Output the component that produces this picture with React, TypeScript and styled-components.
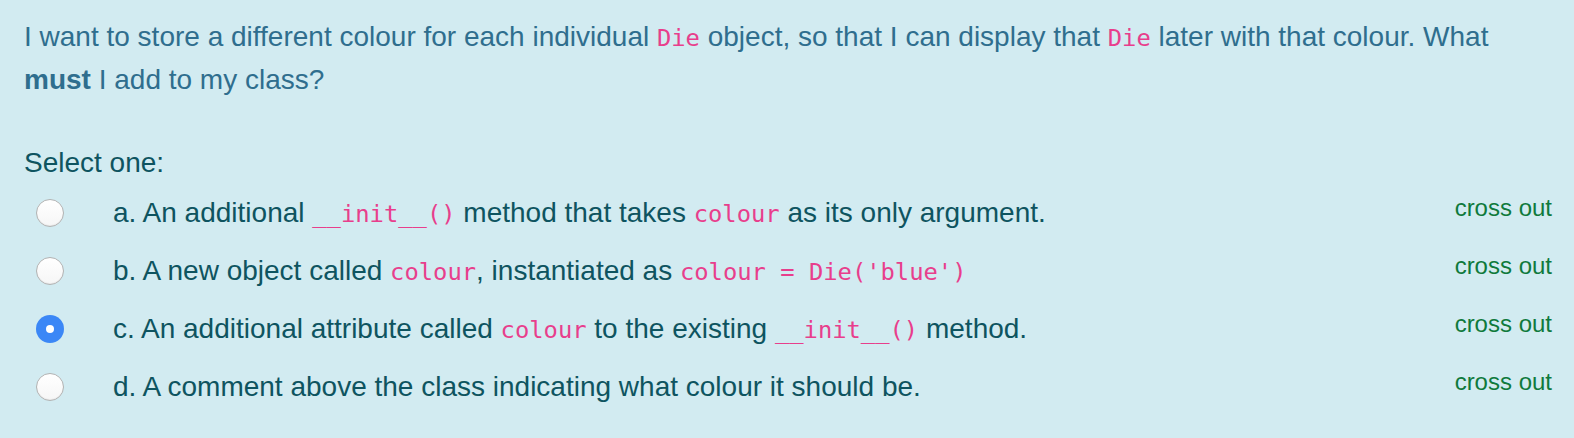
import styled, { createGlobalStyle } from "styled-components";

const GlobalStyle = createGlobalStyle`
    html, body {
        margin: 0;
        padding: 0;
        background-color: #d2ebf1;
    }
`;

type Part = { text: string; code?: boolean };

type Answer = {
    letter: string;
    parts: Part[];
    checked?: boolean;
};

const answers: Answer[] = [
    {
        letter: "a",
        parts: [
            { text: "An additional " },
            { text: "__init__()", code: true },
            { text: " method that takes " },
            { text: "colour", code: true },
            { text: " as its only argument." },
        ],
    },
    {
        letter: "b",
        parts: [
            { text: "A new object called " },
            { text: "colour", code: true },
            { text: ", instantiated as " },
            { text: "colour = Die('blue')", code: true },
        ],
    },
    {
        letter: "c",
        checked: true,
        parts: [
            { text: "An additional attribute called " },
            { text: "colour", code: true },
            { text: " to the existing " },
            { text: "__init__()", code: true },
            { text: " method." },
        ],
    },
    {
        letter: "d",
        parts: [{ text: "A comment above the class indicating what colour it should be." }],
    },
];

const App = () => {
    return (
        <StyledFormulation>
            <GlobalStyle />
            <StyledQuestionText>
                I want to store a different colour for each individual <StyledCode>Die</StyledCode> object, so
                that I can display that <StyledCode>Die</StyledCode> later with that colour. What{" "}
                <strong>must</strong> I add to my class?
            </StyledQuestionText>
            <StyledPrompt>Select one:</StyledPrompt>
            <StyledAnswerList>
                {answers.map((answer) => (
                    <StyledAnswerRow key={answer.letter}>
                        <StyledRadio $checked={!!answer.checked} />
                        <StyledAnswerLabel>
                            {answer.letter}.{" "}
                            {answer.parts.map((part, index) =>
                                part.code ? (
                                    <StyledCode key={index}>{part.text}</StyledCode>
                                ) : (
                                    <span key={index}>{part.text}</span>
                                )
                            )}
                        </StyledAnswerLabel>
                        <StyledCrossOut>cross out</StyledCrossOut>
                    </StyledAnswerRow>
                ))}
            </StyledAnswerList>
        </StyledFormulation>
    );
};

const StyledFormulation = styled.div`
    background-color: #d2ebf1;
    padding: 16px 22px 20px 24px;
    height: 438px;
    box-sizing: border-box;
    font-family: "Liberation Sans", Arial, sans-serif;
    font-size: 28px;
`;

const StyledQuestionText = styled.p`
    margin: 0;
    max-width: 1495px;
    line-height: 42px;
    color: #2f6e8e;

    strong {
        font-weight: bold;
    }
`;

const StyledCode = styled.code`
    font-family: "DejaVu Sans Mono", monospace;
    font-size: 23.8px;
    color: #e83e8c;
`;

const StyledPrompt = styled.div`
    margin-top: 41px;
    line-height: 42px;
    color: #0e5460;
`;

const StyledAnswerList = styled.div`
    display: flex;
    flex-direction: column;
`;

const StyledAnswerRow = styled.div`
    display: flex;
    align-items: center;
    height: 58px;
    padding-left: 12px;
`;

const StyledRadio = styled.span<{ $checked: boolean }>`
    flex: 0 0 auto;
    position: relative;
    width: 28px;
    height: 28px;
    border-radius: 50%;
    box-sizing: border-box;
    ${({ $checked }) =>
        $checked
            ? `
        background: #3b87f6;
        border: none;
        &::after {
            content: "";
            position: absolute;
            left: 10px;
            top: 10px;
            width: 8px;
            height: 8px;
            border-radius: 50%;
            background: #ffffff;
        }
    `
            : `
        background: linear-gradient(#ffffff, #f6f6f6);
        border: 1px solid #b3b3b3;
        box-shadow: inset 0 -1px 1px rgba(0, 0, 0, 0.05);
    `}
`;

const StyledAnswerLabel = styled.div`
    flex: 1;
    margin-left: 49px;
    color: #0e5460;
    line-height: 32px;
`;

const StyledCrossOut = styled.div`
    align-self: flex-start;
    padding-top: 9px;
    font-size: 24px;
    line-height: 30px;
    color: #0f7a3c;
`;

export default App;
